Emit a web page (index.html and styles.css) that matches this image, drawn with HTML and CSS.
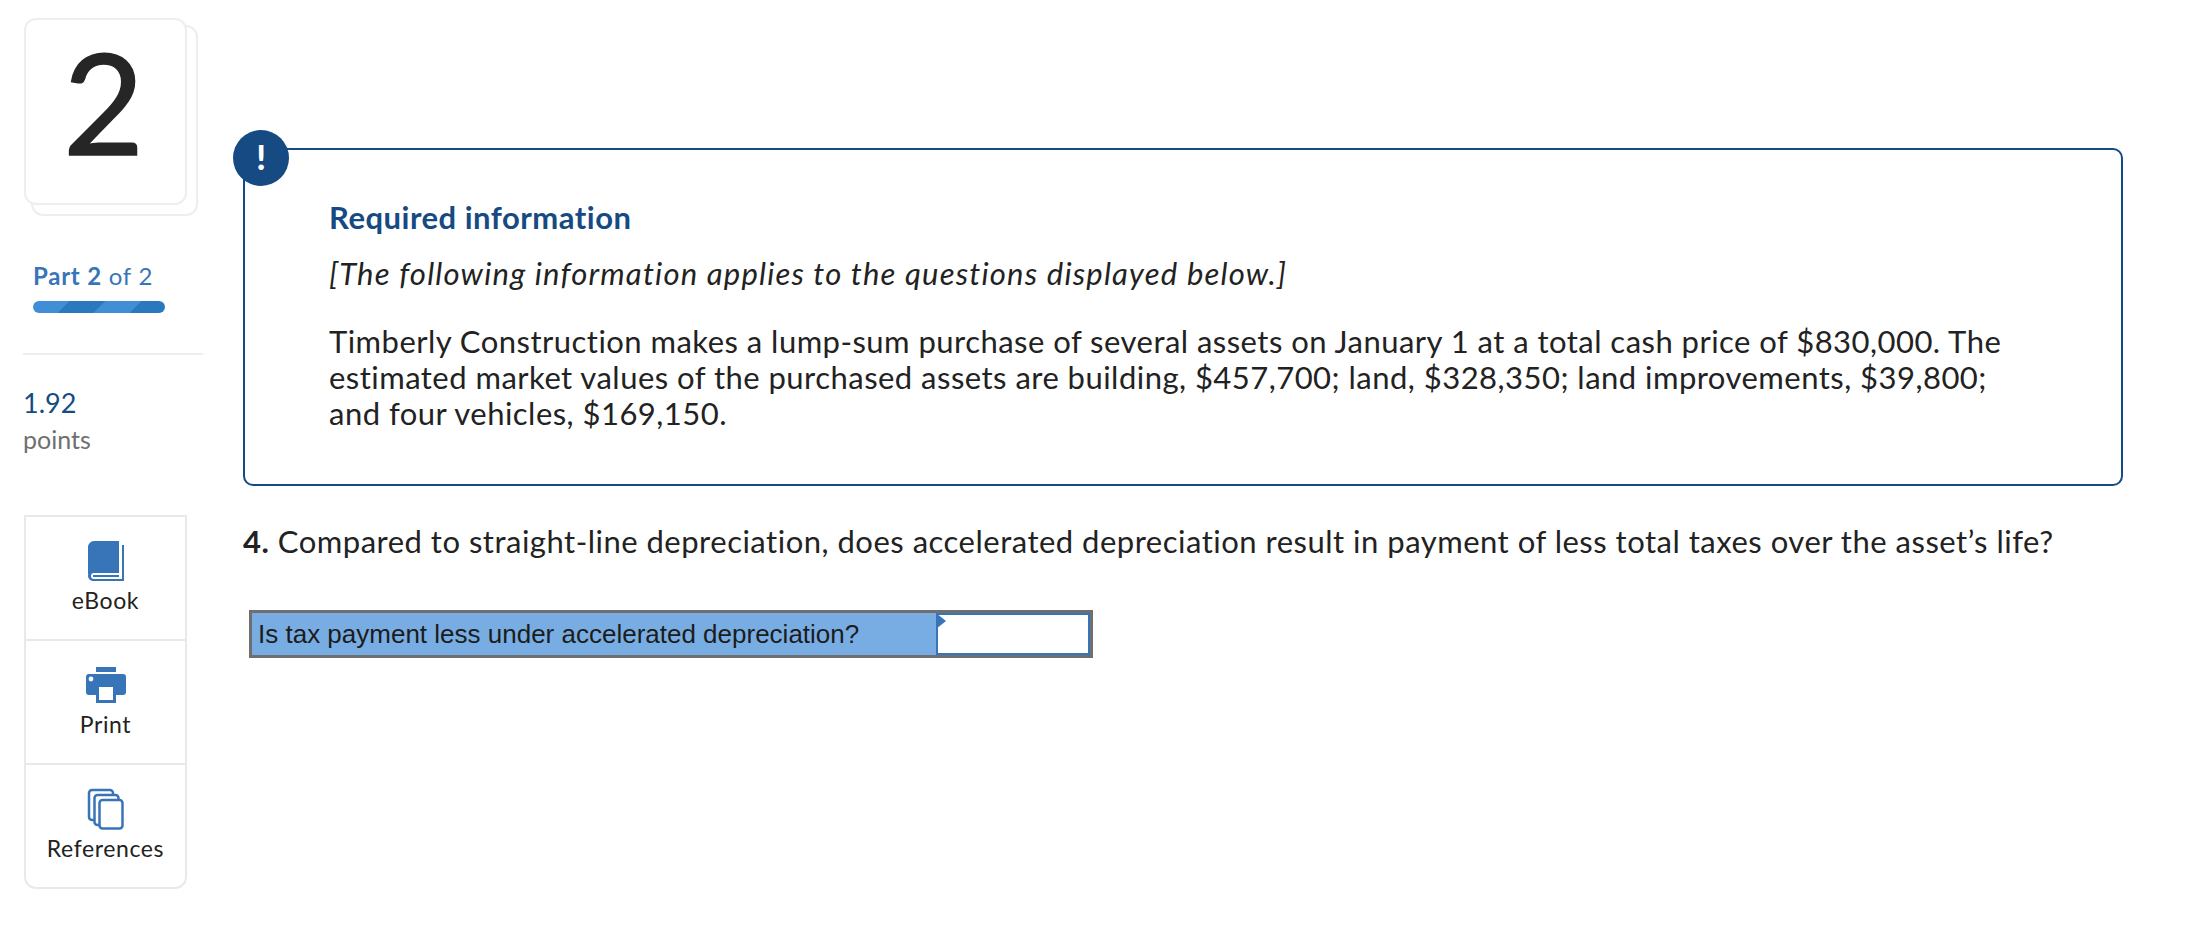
FILE: index.html
```html
<!DOCTYPE html>
<html lang="en">
<head>
    <meta charset="UTF-8">
    <title>Question 2</title>
    <link rel="stylesheet" href="styles.css">
</head>
<body>
    <div class="page">
        <aside class="sidebar">
            <div class="question-card">2</div>
            <div class="part">
                <p class="part-label"><b>Part 2</b> of 2</p>
                <div class="part-bar"></div>
            </div>
            <div class="points">
                <p class="points-value">1.92</p>
                <p class="points-label">points</p>
            </div>
            <ul class="tools">
                <li class="tool">
                    <svg class="tool-icon" width="38" height="42" viewBox="0 0 38 42">
                        <path fill="#3875b8" d="M7 1h25v31H7c-3 0-5 1-6 3V7c0-3 3-6 6-6z"/>
                        <path fill="#3875b8" d="M35 5h2v36H7c-3 0-6-2-6-5s3-5 6-5h25v2H7c-2 0-3 1-3 3s1 3 3 3h28z"/>
                        <rect fill="#3875b8" x="6" y="35" width="26" height="2"/>
                    </svg>
                    <span>eBook</span>
                </li>
                <li class="tool tool-print">
                    <svg class="tool-icon" width="40" height="36" viewBox="0 0 40 36">
                        <rect fill="#3875b8" x="10" y="0" width="20" height="5"/>
                        <path fill="#3875b8" d="M3 7h34c2 0 3 1 3 3v15c0 2-1 3-3 3h-7v8H10v-8H3c-2 0-3-1-3-3V10c0-2 1-3 3-3z"/>
                        <rect fill="#fff" x="13" y="20" width="14" height="13"/>
                        <circle fill="#fff" cx="5" cy="12" r="2.4"/>
                    </svg>
                    <span>Print</span>
                </li>
                <li class="tool">
                    <svg class="tool-icon" width="38" height="42" viewBox="0 0 38 42">
                        <g fill="#fff" stroke="#3875b8" stroke-width="2.500">
                            <rect x="2" y="2" width="24" height="30" rx="3"/>
                            <rect x="7.500" y="7" width="24" height="30" rx="3"/>
                            <rect x="12.500" y="12" width="23" height="28.500" rx="3"/>
                        </g>
                    </svg>
                    <span>References</span>
                </li>
            </ul>
        </aside>

        <main class="content">
            <section class="notice">
                <div class="notice-badge">!</div>
                <h2 class="notice-title">Required information</h2>
                <p class="notice-intro">[The following information applies to the questions displayed below.]</p>
                <p class="notice-text">Timberly Construction makes a lump-sum purchase of several assets on January 1 at a total cash price of $830,000. The estimated market values of the purchased assets are building, $457,700; land, $328,350; land improvements, $39,800; and four vehicles, $169,150.</p>
            </section>

            <p class="question"><b>4.</b> Compared to straight-line depreciation, does accelerated depreciation result in payment of less total taxes over the asset’s life?</p>

            <table class="answer-table">
                <tr>
                    <td class="answer-label">Is tax payment less under accelerated depreciation?</td>
                    <td class="answer-cell"><span class="answer-flag"></span></td>
                </tr>
            </table>
        </main>
    </div>
</body>
</html>
```

FILE: styles.css
```css
* {
    box-sizing: border-box;
}

body {
    margin: 0;
    background-color: #ffffff;
    color: #222222;
    font-family: Lato, sans-serif;
}

p {
    margin: 0;
}

.page {
    display: flex;
    align-items: flex-start;
    gap: 40px;
    padding: 18px 63px 0 23px;
}

/* Left column */
.sidebar {
    width: 180px;
    flex-shrink: 0;
}

.question-card {
    position: relative;
    width: 163px;
    height: 187px;
    margin-left: 1px;
    padding-right: 4px;
    border: 2px solid #eeeeee;
    border-radius: 12px;
    background-color: #ffffff;
    font-size: 140px;
    font-weight: 400;
    line-height: 162px;
    text-align: center;
    color: #262626;
    -webkit-text-stroke: 1.5px #262626;
}

.question-card::after {
    content: "";
    position: absolute;
    left: 5px;
    top: 5px;
    width: 163px;
    height: 187px;
    border: 2px solid #eeeeee;
    border-radius: 12px;
    z-index: -1;
}

.part {
    margin-top: 55px;
    padding: 0 0 40px 10px;
    border-bottom: 2px solid #eeeeee;
}

.part-label {
    font-size: 24px;
    line-height: 32px;
    letter-spacing: 0.75px;
    color: #3875b8;
}

.part-bar {
    width: 132px;
    height: 12px;
    margin-top: 9px;
    border-radius: 6px;
    background: linear-gradient(135deg, #408fd6 25%, #2a78bd 25%, #2a78bd 50%, #408fd6 50%, #408fd6 75%, #2a78bd 75%);
}

.points {
    margin-top: 30px;
}

.points-value {
    font-size: 27px;
    line-height: 36px;
    color: #164a82;
}

.points-label {
    font-size: 25px;
    line-height: 36px;
    color: #6f6f6f;
}

.tools {
    width: 163px;
    margin: 58px 0 0 1px;
    padding: 0;
    list-style: none;
    border: 2px solid #e9e9e9;
    border-radius: 0 0 12px 12px;
}

.tool {
    display: flex;
    flex-direction: column;
    align-items: center;
    height: 124px;
    padding-top: 23px;
    font-size: 23px;
    line-height: 28px;
    letter-spacing: 0.6px;
    border-bottom: 2px solid #e9e9e9;
}

.tool:last-child {
    height: 122px;
    border-bottom: none;
}

.tool-icon {
    display: block;
    margin-bottom: 4px;
}

.tool-print {
    padding-top: 26px;
}

.tool-print .tool-icon {
    margin-bottom: 7px;
}

/* Main column */
.content {
    flex: 1;
    padding-top: 130px;
}

.notice {
    position: relative;
    height: 338px;
    padding: 47px 100px 0 84px;
    border: 2px solid #164a82;
    border-radius: 10px;
}

.notice-badge {
    position: absolute;
    left: -12px;
    top: -20px;
    width: 56px;
    height: 56px;
    border-radius: 50%;
    background-color: #164a82;
    color: #ffffff;
    font-size: 34px;
    font-weight: 900;
    line-height: 54px;
    text-align: center;
}

.notice-title {
    margin: 0;
    font-size: 31px;
    line-height: 40px;
    font-weight: 700;
    letter-spacing: 0.5px;
    color: #164a82;
}

.notice-intro {
    margin-top: 18px;
    font-size: 31px;
    line-height: 36px;
    letter-spacing: 1.2px;
    font-style: italic;
}

.notice-text {
    margin-top: 32px;
    font-size: 31px;
    line-height: 36px;
    letter-spacing: 0.47px;
}

.question {
    margin-top: 35px;
    font-size: 31px;
    line-height: 40px;
    letter-spacing: 0.5px;
}

.answer-table {
    width: 844px;
    height: 48px;
    margin: 49px 0 0 6px;
    border-collapse: collapse;
    border: 3px solid #6f6f6f;
    font-family: "Liberation Sans", Arial, sans-serif;
}

.answer-table td {
    padding: 0 6px;
}

.answer-label {
    width: 685px;
    background-color: #78ade3;
    font-size: 26px;
    color: #1c1c1c;
}

.answer-cell {
    background-color: #ffffff;
    box-shadow: inset 0 0 0 2px #3875b8;
    vertical-align: top;
}

.answer-table .answer-cell {
    padding: 0;
}

.answer-flag {
    display: block;
    width: 0;
    height: 0;
    border-style: solid;
    border-width: 8px 0 8px 10px;
    border-color: transparent transparent transparent #3875b8;
}
```
